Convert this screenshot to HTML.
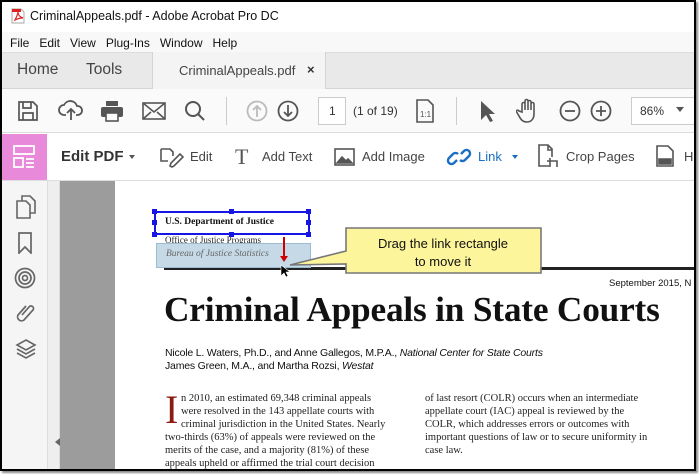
<!DOCTYPE html>
<html><head><style>
*{margin:0;padding:0;box-sizing:border-box}
body{width:699px;height:474px;background:#fff;position:relative;overflow:hidden;font-family:"Liberation Sans",sans-serif}
.frame{position:absolute;left:0;top:0;width:696px;height:471px;overflow:hidden;background:#fff}
.bord{position:absolute;left:0;top:0;width:696px;height:471px;border:2px solid #000;box-shadow:2px 2px 2px #888;z-index:10}
.a{position:absolute;white-space:nowrap}
.serif{font-family:"Liberation Serif",serif}
svg{position:absolute}
</style></head><body>
<div class="frame">
<svg style="left:10px;top:8px" width="16" height="16" viewBox="0 0 16 16"><path d="M2 1h9l3 3v11H2z" fill="#fff" stroke="#aaa"/><path d="M2 1h9v3H2z" fill="#d22"/><path d="M5 12c2-4 3-6 3-8 0 3 2 5 5 6-3 0-6 1-8 2z" fill="none" stroke="#d22" stroke-width="1.2"/></svg>
<div class="a" style="left:30px;top:9px;font-size:12.5px;color:#111">CriminalAppeals.pdf - Adobe Acrobat Pro DC</div>
<div class="a" style="left:0;top:32px;width:700px;height:21px;background:#f8f8f8"></div>
<div class="a" style="left:10px;top:36px;font-size:12px;color:#111">File&nbsp;&nbsp;&nbsp;Edit&nbsp;&nbsp;&nbsp;View&nbsp;&nbsp;&nbsp;Plug-Ins&nbsp;&nbsp;&nbsp;Window&nbsp;&nbsp;&nbsp;Help</div>
<div class="a" style="left:0;top:52px;width:700px;height:37px;background:#e9e9e9;border-top:1px solid #ddd;border-bottom:1px solid #d4d4d4"></div>
<div class="a" style="left:152px;top:52px;width:174px;height:37px;background:#f4f4f4;border-left:1px solid #d4d4d4;border-right:1px solid #d4d4d4"></div>
<div class="a" style="left:17px;top:61px;font-size:15.5px;color:#444">Home</div>
<div class="a" style="left:86px;top:61px;font-size:15.5px;color:#444">Tools</div>
<div class="a" style="left:179px;top:63px;font-size:13px;color:#444">CriminalAppeals.pdf</div>
<div class="a" style="left:307px;top:62px;font-size:13px;color:#333;font-weight:bold">×</div>
<div class="a" style="left:0;top:89px;width:700px;height:44px;background:#fafafa;border-bottom:1px solid #ddd"></div>
<svg style="left:17px;top:100px" width="22" height="22" viewBox="0 0 22 22" fill="none" stroke="#555" stroke-width="1.7"><path d="M2 2h14l4 4v14H2z"/><path d="M6 2v6h8V2M6 20v-7h10v7"/></svg>
<svg style="left:58px;top:98px" width="26" height="24" viewBox="0 0 26 24" fill="none" stroke="#555" stroke-width="1.8"><path d="M8 17H6a5 5 0 0 1 0-10 7 7 0 0 1 13 1 4.5 4.5 0 0 1 1 9h-2"/><path d="M13 22V11M9 15l4-4 4 4"/></svg>
<svg style="left:100px;top:100px" width="24" height="22" viewBox="0 0 24 22" fill="#555"><rect x="6" y="1" width="12" height="5"/><rect x="1" y="7" width="22" height="10" rx="2"/><rect x="6" y="13" width="12" height="8" fill="#fafafa" stroke="#555" stroke-width="1.6"/></svg>
<svg style="left:142px;top:102px" width="24" height="18" viewBox="0 0 24 18" fill="none" stroke="#555" stroke-width="1.6"><rect x="1" y="1" width="22" height="16"/><path d="M1 1l11 9 11-9M1 17l8-7M23 17l-8-7"/></svg>
<svg style="left:184px;top:100px" width="22" height="22" viewBox="0 0 22 22" fill="none" stroke="#555" stroke-width="2"><circle cx="9" cy="9" r="7"/><path d="M14 14l6 6"/></svg>
<div class="a" style="left:226px;top:97px;width:1px;height:28px;background:#ccc"></div>
<svg style="left:246px;top:100px" width="22" height="22" viewBox="0 0 22 22" fill="none" stroke="#bbb" stroke-width="1.8"><circle cx="11" cy="11" r="9.5"/><path d="M11 17V6M7 10l4-4 4 4"/></svg>
<svg style="left:277px;top:100px" width="22" height="22" viewBox="0 0 22 22" fill="none" stroke="#555" stroke-width="1.8"><circle cx="11" cy="11" r="9.5"/><path d="M11 5v11M7 12l4 4 4-4"/></svg>
<div class="a" style="left:318px;top:97px;width:28px;height:28px;background:#fff;border:1px solid #ccc"></div>
<div class="a" style="left:329px;top:104px;font-size:12px;color:#333">1</div>
<div class="a" style="left:353px;top:104px;font-size:12px;color:#333">(1 of 19)</div>
<svg style="left:416px;top:99px" width="18" height="24" viewBox="0 0 18 24" fill="none" stroke="#555" stroke-width="1.6"><path d="M1 1h11l5 5v17H1z"/><text x="4" y="18" font-size="8" fill="#555" stroke="none" font-family="Liberation Sans">1:1</text></svg>
<div class="a" style="left:456px;top:97px;width:1px;height:28px;background:#ccc"></div>
<svg style="left:479px;top:100px" width="16" height="24" viewBox="0 0 16 24" fill="#555"><path d="M2 1v19l5-5 4 7 3-1-4-7h6z"/></svg>
<svg style="left:516px;top:98px" width="24" height="26" viewBox="0 0 24 26" fill="none" stroke="#555" stroke-width="1.6"><path d="M6 14V6a1.5 1.5 0 0 1 3 0v6V3a1.5 1.5 0 0 1 3 0v9V4a1.5 1.5 0 0 1 3 0v8V6a1.5 1.5 0 0 1 3 0v10c0 5-3 8-7 8s-6-2-8-6l-3-5c1-1 2-1 3 0z"/></svg>
<svg style="left:559px;top:100px" width="22" height="22" viewBox="0 0 22 22" fill="none" stroke="#555" stroke-width="1.8"><circle cx="11" cy="11" r="9.5"/><path d="M6 11h10"/></svg>
<svg style="left:590px;top:100px" width="22" height="22" viewBox="0 0 22 22" fill="none" stroke="#555" stroke-width="1.8"><circle cx="11" cy="11" r="9.5"/><path d="M6 11h10M11 6v10"/></svg>
<div class="a" style="left:631px;top:97px;width:66px;height:28px;background:#fff;border:1px solid #ccc"></div>
<div class="a" style="left:640px;top:104px;font-size:12px;color:#333">86%</div>
<div class="a" style="left:676px;top:107px;border:4px solid transparent;border-top:5px solid #555"></div>
<div class="a" style="left:0;top:134px;width:47px;height:46px;background:#e88ad9"></div>
<svg style="left:13px;top:145px" width="22" height="24" viewBox="0 0 22 24" fill="none" stroke="#fff" stroke-width="1.8"><rect x="1" y="1" width="20" height="8"/><rect x="1" y="13" width="9" height="9"/><path d="M13 14h8M13 18h8M13 22h8"/></svg>
<div class="a" style="left:61px;top:148px;font-size:15px;color:#333;font-weight:bold">Edit PDF</div>
<div class="a" style="left:129px;top:155px;border:3.5px solid transparent;border-top:4px solid #555"></div>
<svg style="left:160px;top:145px" width="26" height="24" viewBox="0 0 26 24" fill="none" stroke="#555" stroke-width="1.6"><path d="M1 4h9l3 3v4M1 4v12h7"/><path d="M12 22l-2-1 1-3 9-9 3 3-9 9z"/></svg>
<div class="a" style="left:190px;top:149px;font-size:13px;color:#444">Edit</div>
<div class="a serif" style="left:235px;top:144px;font-size:22px;color:#555">T</div>
<div class="a" style="left:262px;top:149px;font-size:13px;color:#444">Add Text</div>
<svg style="left:334px;top:148px" width="21" height="18" viewBox="0 0 21 18" fill="none" stroke="#555" stroke-width="1.6"><rect x="1" y="1" width="19" height="16"/><path d="M3 15l5-6 4 4 2-2 4 4z" fill="#555"/></svg>
<div class="a" style="left:362px;top:149px;font-size:13px;color:#444">Add Image</div>
<svg style="left:446px;top:145px" width="26" height="24" viewBox="0 0 26 24" fill="none" stroke="#1a6fc4" stroke-width="2.4"><path d="M11 15l-3 3a3.5 3.5 0 0 1-5-5l4-4a3.5 3.5 0 0 1 5 0M15 9l3-3a3.5 3.5 0 0 1 5 5l-4 4a3.5 3.5 0 0 1-5 0"/></svg>
<div class="a" style="left:478px;top:149px;font-size:13px;color:#1a6fc4">Link</div>
<div class="a" style="left:512px;top:155px;border:3.5px solid transparent;border-top:4px solid #1a6fc4"></div>
<svg style="left:537px;top:144px" width="24" height="26" viewBox="0 0 24 26" fill="none" stroke="#555" stroke-width="1.6"><path d="M12 22H2V1h9l4 4v8"/><path d="M11 1v5h4M13 14v9M10 17h10v6"/></svg>
<div class="a" style="left:566px;top:149px;font-size:13px;color:#444">Crop Pages</div>
<svg style="left:656px;top:145px" width="18" height="22" viewBox="0 0 18 22" fill="none" stroke="#555" stroke-width="1.6"><path d="M1 1h11l5 5v15H1z"/><path d="M3 14h12v5H3z" fill="#555"/></svg>
<div class="a" style="left:684px;top:149px;font-size:13px;color:#444">H</div>
<div class="a" style="left:0;top:180px;width:700px;height:1px;background:#ddd"></div>
<div class="a" style="left:0;top:181px;width:47px;height:300px;background:#f5f5f5"></div>
<div class="a" style="left:47px;top:181px;width:13px;height:300px;background:#eeeeee;border-left:1px solid #ddd;border-right:1px solid #ddd"></div>
<div class="a" style="left:51px;top:438px;border:4px solid transparent;border-right:5px solid #666"></div>
<div class="a" style="left:60px;top:181px;width:55px;height:300px;background:#9c9c9c"></div>
<svg style="left:16px;top:195px" width="20" height="24" viewBox="0 0 20 24" fill="none" stroke="#666" stroke-width="1.6"><path d="M6 6V1h8l5 5v12h-5M1 6h9l4 4v13H1z"/></svg>
<svg style="left:17px;top:232px" width="16" height="22" viewBox="0 0 16 22" fill="none" stroke="#666" stroke-width="1.7"><path d="M2 1h12v20l-6-6-6 6z"/></svg>
<svg style="left:14px;top:267px" width="22" height="22" viewBox="0 0 22 22" fill="none" stroke="#666" stroke-width="1.7"><circle cx="11" cy="11" r="9.5"/><circle cx="11" cy="11" r="6"/><circle cx="11" cy="11" r="2.5"/></svg>
<svg style="left:15px;top:302px" width="20" height="24" viewBox="0 0 20 24" fill="none" stroke="#666" stroke-width="1.7"><path d="M7 13l7-8a2.5 2.5 0 0 1 4 3l-9 10a4 4 0 0 1-6-5l8-9"/></svg>
<svg style="left:15px;top:339px" width="22" height="22" viewBox="0 0 22 22" fill="none" stroke="#666" stroke-width="1.6"><path d="M11 1l9 5-9 5-9-5z M2 10l9 5 9-5M2 14l9 5 9-5"/></svg>
<div class="a serif" style="left:165px;top:217px;font-size:9.5px;font-weight:bold;color:#111">U.S. Department of Justice</div>
<div class="a serif" style="left:165px;top:235px;font-size:9px;color:#222">Office of Justice Programs</div>
<div class="a" style="left:154px;top:211px;width:156px;height:24px;border:2px solid #1515e8"></div>
<div class="a" style="left:152px;top:209px;width:5px;height:5px;background:#1515e8"></div>
<div class="a" style="left:229px;top:209px;width:5px;height:5px;background:#1515e8"></div>
<div class="a" style="left:306px;top:209px;width:5px;height:5px;background:#1515e8"></div>
<div class="a" style="left:152px;top:220px;width:5px;height:5px;background:#1515e8"></div>
<div class="a" style="left:306px;top:220px;width:5px;height:5px;background:#1515e8"></div>
<div class="a" style="left:152px;top:232px;width:5px;height:5px;background:#1515e8"></div>
<div class="a" style="left:229px;top:232px;width:5px;height:5px;background:#1515e8"></div>
<div class="a" style="left:306px;top:232px;width:5px;height:5px;background:#1515e8"></div>
<div class="a" style="left:164px;top:267px;width:532px;height:3px;background:#222"></div>
<div class="a" style="left:156px;top:243px;width:155px;height:25px;background:#c5d9e6;border:1px solid #9bbdd4"></div>
<div class="a serif" style="left:166px;top:249px;font-size:9.5px;font-style:italic;color:#666">Bureau of Justice Statistics</div>
<div class="a" style="left:283px;top:237px;width:2px;height:22px;background:#c00"></div>
<div class="a" style="left:280px;top:256px;border:4px solid transparent;border-top:6px solid #c00"></div>
<svg style="left:280px;top:264px" width="10" height="14" viewBox="0 0 10 14"><path d="M1 1v11l3-3 2 4 2-1-2-4h4z" fill="#000" stroke="#fff" stroke-width=".6"/></svg>
<svg style="left:288px;top:227px" width="260" height="50" viewBox="0 0 260 50"><path d="M58 1h195v45H58V37L2 38 58 24z" fill="#fdf59c" stroke="#777" stroke-width="1.6"/></svg>
<div class="a" style="left:345px;top:235px;width:196px;text-align:center;font-size:13px;line-height:18px;color:#111;white-space:normal">Drag the link rectangle<br>to move it</div>
<div class="a" style="left:609px;top:278px;font-size:9.5px;color:#111">September 2015, N</div>
<div class="a serif" style="left:164px;top:290px;font-size:35.3px;font-weight:bold;color:#111;letter-spacing:-0.2px">Criminal Appeals in State Courts</div>
<div class="a" style="left:165px;top:347px;font-size:10.5px;color:#111;letter-spacing:-0.2px">Nicole L. Waters, Ph.D., and Anne Gallegos, M.P.A., <i>National Center for State Courts</i></div>
<div class="a" style="left:165px;top:360px;font-size:10.5px;color:#111;letter-spacing:-0.2px">James Green, M.A., and Martha Rozsi, <i>Westat</i></div>
<div class="a serif" style="left:165px;top:390px;font-size:40px;line-height:40px;color:#8b1a12">I</div>
<div class="a serif" style="left:181px;top:392px;font-size:10.5px;line-height:13px;color:#222">n 2010, an estimated 69,348 criminal appeals<br>were resolved in the 143 appellate courts with<br>criminal jurisdiction in the United States. Nearly</div>
<div class="a serif" style="left:165px;top:431px;font-size:10.5px;line-height:13px;color:#222">two-thirds (63%) of appeals were reviewed on the<br>merits of the case, and a majority (81%) of these<br>appeals upheld or affirmed the trial court decision</div>
<div class="a serif" style="left:425px;top:392px;font-size:10.5px;line-height:13px;color:#222">of last resort (COLR) occurs when an intermediate<br>appellate court (IAC) appeal is reviewed by the<br>COLR, which addresses errors or outcomes with<br>important questions of law or to secure uniformity in<br>case law.</div>
</div>
<div class="bord"></div>
</body></html>
